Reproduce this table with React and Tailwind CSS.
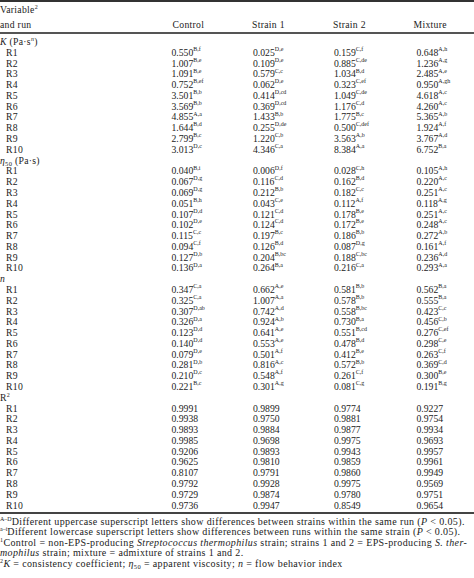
import React from 'react';

const sections = [
  {
    title: (
      <>
        <i>K</i> (Pa·s<sup className="text-[6px] -top-[0.7em]"><i>n</i></sup>)
      </>
    ),
    rows: [
      [['0.550', 'B,f'], ['0.025', 'D,e'], ['0.159', 'C,f'], ['0.648', 'A,h']],
      [['1.007', 'B,e'], ['0.109', 'D,e'], ['0.885', 'C,de'], ['1.236', 'A,g']],
      [['1.091', 'B,e'], ['0.579', 'C,c'], ['1.034', 'B,d'], ['2.485', 'A,e']],
      [['0.752', 'B,ef'], ['0.062', 'D,e'], ['0.323', 'C,ef'], ['0.950', 'A,gh']],
      [['3.501', 'B,b'], ['0.414', 'D,cd'], ['1.049', 'C,de'], ['4.618', 'A,c']],
      [['3.569', 'B,b'], ['0.369', 'D,cd'], ['1.176', 'C,d'], ['4.260', 'A,c']],
      [['4.855', 'A,a'], ['1.433', 'B,b'], ['1.775', 'B,c'], ['5.365', 'A,b']],
      [['1.644', 'B,d'], ['0.255', 'D,de'], ['0.500', 'C,def'], ['1.924', 'A,f']],
      [['2.799', 'B,c'], ['1.220', 'C,b'], ['3.563', 'A,b'], ['3.767', 'A,d']],
      [['3.013', 'D,c'], ['4.346', 'C,a'], ['8.384', 'A,a'], ['6.752', 'B,a']],
    ],
  },
  {
    title: (
      <>
        <i>η</i>
        <sub className="text-[6.5px] top-[0.3em]">50</sub> (Pa·s)
      </>
    ),
    rows: [
      [['0.040', 'B,i'], ['0.006', 'D,f'], ['0.028', 'C,h'], ['0.105', 'A,h']],
      [['0.067', 'D,g'], ['0.116', 'C,d'], ['0.162', 'B,d'], ['0.220', 'A,c']],
      [['0.069', 'D,g'], ['0.212', 'B,b'], ['0.182', 'C,c'], ['0.251', 'A,c']],
      [['0.051', 'B,h'], ['0.043', 'C,e'], ['0.112', 'A,f'], ['0.118', 'A,g']],
      [['0.107', 'D,d'], ['0.121', 'C,d'], ['0.178', 'B,e'], ['0.251', 'A,c']],
      [['0.102', 'D,e'], ['0.124', 'C,d'], ['0.172', 'B,e'], ['0.248', 'A,c']],
      [['0.115', 'C,c'], ['0.197', 'B,c'], ['0.186', 'B,b'], ['0.272', 'A,b']],
      [['0.094', 'C,f'], ['0.126', 'B,d'], ['0.087', 'D,g'], ['0.161', 'A,f']],
      [['0.127', 'D,b'], ['0.204', 'B,bc'], ['0.188', 'C,bc'], ['0.236', 'A,d']],
      [['0.136', 'D,a'], ['0.264', 'B,a'], ['0.216', 'C,a'], ['0.293', 'A,a']],
    ],
  },
  {
    title: <i>n</i>,
    rows: [
      [['0.347', 'C,a'], ['0.662', 'A,e'], ['0.581', 'B,b'], ['0.562', 'B,a']],
      [['0.325', 'C,a'], ['1.007', 'A,a'], ['0.578', 'B,b'], ['0.555', 'B,a']],
      [['0.307', 'D,ab'], ['0.742', 'A,d'], ['0.558', 'B,bc'], ['0.423', 'C,c']],
      [['0.326', 'D,a'], ['0.924', 'A,b'], ['0.730', 'B,a'], ['0.456', 'C,b']],
      [['0.123', 'D,d'], ['0.641', 'A,e'], ['0.551', 'B,cd'], ['0.276', 'C,ef']],
      [['0.140', 'D,d'], ['0.553', 'A,e'], ['0.478', 'B,d'], ['0.298', 'C,e']],
      [['0.079', 'D,e'], ['0.501', 'A,f'], ['0.412', 'B,e'], ['0.263', 'C,f']],
      [['0.281', 'D,b'], ['0.816', 'A,c'], ['0.572', 'B,b'], ['0.369', 'C,d']],
      [['0.210', 'D,c'], ['0.548', 'A,f'], ['0.261', 'C,f'], ['0.300', 'B,e']],
      [['0.221', 'B,c'], ['0.301', 'A,g'], ['0.081', 'C,g'], ['0.191', 'B,g']],
    ],
  },
  {
    title: (
      <>
        R<sup className="text-[6px] -top-[0.7em]">2</sup>
      </>
    ),
    rows: [
      ['0.9991', '0.9899', '0.9774', '0.9227'],
      ['0.9938', '0.9750', '0.9881', '0.9754'],
      ['0.9893', '0.9884', '0.9877', '0.9934'],
      ['0.9985', '0.9698', '0.9975', '0.9693'],
      ['0.9206', '0.9893', '0.9943', '0.9957'],
      ['0.9625', '0.9810', '0.9859', '0.9961'],
      ['0.8107', '0.9791', '0.9860', '0.9949'],
      ['0.9792', '0.9928', '0.9975', '0.9569'],
      ['0.9729', '0.9874', '0.9780', '0.9751'],
      ['0.9736', '0.9947', '0.8549', '0.9654'],
    ],
  },
];

const grid = 'grid grid-cols-[171.5px_81.5px_81px_82.5px_1fr]';

function Cell({ cell }) {
  if (typeof cell === 'string') return <div>{cell}</div>;
  return (
    <div className="whitespace-nowrap">
      {cell[0]}
      <sup className="text-[6px] -top-[0.8em]">{cell[1]}</sup>
    </div>
  );
}

export default function App() {
  return (
    <div
      className="w-[474px] h-[578px] overflow-hidden bg-white text-[#222] text-[9.7px]"
      style={{ fontFamily: '"Liberation Serif", "Times New Roman", serif' }}
    >
      <div className="h-[2px] bg-[#333]" />

      <div className={`${grid} pt-[1px] leading-[14.5px] tracking-[0.3px]`}>
        <div>
          <div>
            Variable<sup className="text-[6px] -top-[0.7em]">2</sup>
          </div>
          <div>and run</div>
        </div>
        <div className="self-end pl-[1px]">Control</div>
        <div className="self-end -ml-[1px]">Strain 1</div>
        <div className="self-end -ml-[1px]">Strain 2</div>
        <div className="self-end -ml-[3px]">Mixture</div>
      </div>

      <div className="h-[2px] bg-[#555]" />

      <div className="pt-[3px] leading-[10.78px]">
        {sections.map((s, si) => (
          <div key={si}>
            <div className="whitespace-nowrap tracking-[0.3px]">{s.title}</div>
            {s.rows.map((r, ri) => (
              <div key={ri} className={grid}>
                <div className="pl-[6px] tracking-[0.3px]">R{ri + 1}</div>
                {r.map((c, ci) => (
                  <Cell key={ci} cell={c} />
                ))}
              </div>
            ))}
          </div>
        ))}
      </div>

      <div className="mt-[1px] h-[1.5px] bg-[#444]" />

      <div className="pt-[3px] leading-[10.45px] whitespace-nowrap text-[10px] tracking-[0.37px]">
        <div>
          <sup className="text-[6px] -top-[0.7em] tracking-normal">A–D</sup>Different uppercase superscript
          letters show differences between strains within the same run (<i>P</i> &lt; 0.05).
        </div>
        <div>
          <sup className="text-[6px] -top-[0.7em] tracking-normal">a–i</sup>Different lowercase superscript
          letters show differences between runs within the same strain (<i>P</i> &lt; 0.05).
        </div>
        <div>
          <sup className="text-[6px] -top-[0.7em]">1</sup>Control = non-EPS-producing{' '}
          <i>Streptococcus thermophilus</i> strain; strains 1 and 2 = EPS-producing <i>S. ther-</i>
        </div>
        <div>
          <i>mophilus</i> strain; mixture = admixture of strains 1 and 2.
        </div>
        <div>
          <sup className="text-[6px] -top-[0.7em]">2</sup>
          <i>K</i> = consistency coefficient; <i>η</i>
          <sub className="text-[6.5px] top-[0.3em]">50</sub> = apparent viscosity; <i>n</i> = flow
          behavior index
        </div>
      </div>
    </div>
  );
}
